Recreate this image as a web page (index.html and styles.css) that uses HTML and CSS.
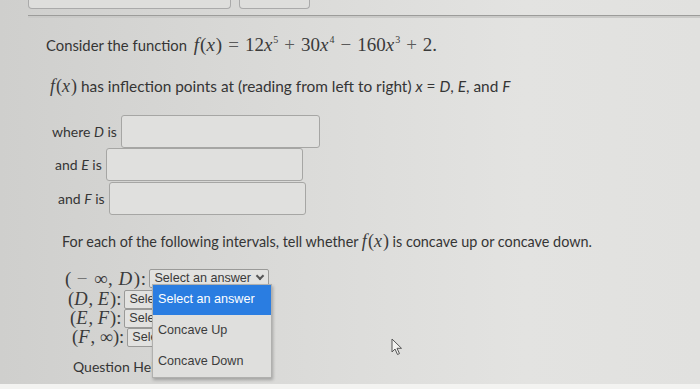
FILE: index.html
```html
<!DOCTYPE html>
<html lang="en">
<head>
  <meta charset="UTF-8">
  <title>Inflection points</title>
  <link rel="stylesheet" href="styles.css">
</head>
<body>
  <div class="page">
    <!-- tabs cut off at the top of the photo -->
    <div class="topbar">
      <div class="tab tab-wide"></div>
      <div class="tab tab-small"></div>
    </div>

    <p class="line line-first">Consider the function <span class="m"><i>f</i>(<i>x</i>)<span class="op">=</span>12<i>x</i><sup>5</sup><span class="op">+</span>30<i>x</i><sup>4</sup><span class="op">−</span>160<i>x</i><sup>3</sup><span class="op">+</span>2.</span></p>

    <p class="line line-second"><span class="m"><i>f</i>(<i>x</i>)</span> has inflection points at (reading from left to right) <em>x</em> = <em>D</em>, <em>E</em>, and <em>F</em></p>

    <div class="answers">
      <div class="answer-row row-d"><span>where <em>D</em> is</span><input type="text" class="answer-box"></div>
      <div class="answer-row row-e"><span>and <em>E</em> is</span><input type="text" class="answer-box"></div>
      <div class="answer-row row-f"><span>and <em>F</em> is</span><input type="text" class="answer-box"></div>
    </div>

    <p class="line line-intervals">For each of the following intervals, tell whether <span class="m"><i>f</i>(<i>x</i>)</span> is concave up or concave down.</p>

    <div class="intervals">
      <div class="interval interval-1"><span class="m">(<span class="neg">−</span>∞, <i>D</i>):</span><div class="select">Select an answer <span class="chev"></span></div></div>
      <div class="interval interval-2"><span class="m">(<i>D</i>, <i>E</i>):</span><div class="select select-cut"><span class="cut">Select an answer</span></div></div>
      <div class="interval interval-3"><span class="m">(<i>E</i>, <i>F</i>):</span><div class="select select-cut"><span class="cut">Select an answer</span></div></div>
      <div class="interval interval-4"><span class="m">(<i>F</i>, ∞):</span><div class="select select-cut select-short"><span class="cut">Select an answer</span></div></div>

      <!-- open dropdown of the first select -->
      <ul class="options">
        <li class="active">Select an answer</li>
        <li>Concave Up</li>
        <li>Concave Down</li>
      </ul>
    </div>

    <p class="help"><span class="cut help-text">Question Help</span></p>

    <svg class="cursor" width="13" height="18" viewBox="0 0 13 18">
      <path d="M1 1 L1 14 L4 11 L6.5 16.5 L8.5 15.6 L6 10.3 L10.5 10.3 Z" fill="#f2f2f0" stroke="#555" stroke-width="1"/>
    </svg>
  </div>
</body>
</html>
```

FILE: styles.css
```css
/* Page */
body {
  margin: 0;
  background: linear-gradient(90deg, #cfcfcd 0%, #dadad8 40%, #e3e3e1 75%, #e1e1df 100%);
  color: #353535;
  font-family: 'Lato', 'Open Sans', sans-serif;
  font-size: 14px;
  width: 700px;
  height: 389px;
  overflow: hidden;
}

.page {
  position: relative;
  height: 384px;
  border-bottom: 5px solid #f3f3f1;
}

/* Top strip */
.topbar {
  display: flex;
  gap: 8px;
  height: 15px;
  margin-left: 28px;
  border-bottom: 1px solid #9c9c9a;
  box-shadow: 0 2px 0 #cacac8;
}

.tab {
  height: 8px;
  border: 1px solid #aaa;
  border-top: none;
  border-radius: 0 0 4px 4px;
  background: #dededc;
}

.tab-wide { width: 201px; }
.tab-small { width: 69px; }

/* Text lines */
.line {
  margin: 0;
  white-space: nowrap;
}

.line-first {
  padding: 18px 0 0 46px;
  font-size: 14.8px;
}

.line-second {
  padding: 20px 0 0 50px;
  font-size: 15.4px;
}

.line-intervals {
  padding: 16px 0 0 62px;
  font-size: 14.4px;
}

.m {
  font-family: 'Liberation Serif', 'Times New Roman', serif;
  font-size: 18px;
  color: #3a3a3a;
}

.line-first .m {
  font-size: 19px;
  margin-left: 3px;
}

.m i {
  padding-right: 1px;
}

.m sup {
  font-size: 10px;
  vertical-align: 8px;
  line-height: 0;
}

.op {
  margin: 0 6px;
  color: #5a5a5a;
}

.neg {
  margin: 0 6px 0 5px;
  color: #777;
}

/* Answer boxes */
.answers {
  padding-top: 18px;
}

.answer-row {
  display: flex;
  align-items: center;
  height: 33px;
  gap: 4px;
}

.answer-box {
  width: 195px;
  height: 31px;
  margin: 0;
  padding: 0;
  border: 1px solid #a6a6a4;
  border-radius: 3px;
  background: #e0e0de;
}

.row-d { padding-left: 52px; }
.row-e { padding-left: 55px; }
.row-f { padding-left: 58px; margin-top: 1px; }

.row-d .answer-box { width: 197px; }

/* Interval selects */
.intervals {
  position: relative;
  padding-top: 16px;
}

.interval {
  display: flex;
  align-items: center;
  gap: 3px;
  height: 19.2px;
  white-space: nowrap;
}

.interval-1 { padding-left: 65px; height: 21.5px; }
.interval-2 { padding-left: 68px; }
.interval-3 { padding-left: 70px; }
.interval-4 { padding-left: 72px; }

.interval .m {
  font-size: 18.5px;
  line-height: 19px;
}

.interval-1 .m {
  font-size: 19px;
  letter-spacing: 0.5px;
}

.select {
  height: 17px;
  line-height: 17px;
  padding: 0 4px;
  border: 1px solid #9a9a98;
  border-radius: 2px;
  background: #e2e2e0;
  font-family: 'Liberation Sans', Arial, sans-serif;
  font-size: 12.6px;
  color: #3a3a3a;
}

.select-cut {
  width: 32px;
}

.select-short {
  width: 23px;
}

.cut {
  display: block;
  overflow: hidden;
  white-space: nowrap;
}

.chev {
  display: inline-block;
  width: 4px;
  height: 4px;
  margin: 0 1px 3px 2px;
  border-right: 2px solid #555;
  border-bottom: 2px solid #555;
  transform: rotate(45deg);
}

/* Open list */
.options {
  position: absolute;
  left: 152px;
  top: 32px;
  width: 118px;
  margin: 0;
  padding: 0;
  list-style: none;
  background: #dfdfdd;
  border: 1px solid #b0b0ae;
  box-shadow: 1px 2px 3px rgba(0, 0, 0, 0.25);
  font-family: 'Liberation Sans', Arial, sans-serif;
  font-size: 12.6px;
  color: #3c3c3c;
}

.options li {
  height: 31px;
  line-height: 30px;
  padding-left: 5px;
}

.options li.active {
  height: 30px;
  line-height: 28px;
  background: #2a7de1;
  color: #fff;
}

.help {
  margin: 0;
  padding: 11px 0 0 73px;
}

.help-text {
  width: 79px;
}

.cursor {
  position: absolute;
  left: 391px;
  top: 338px;
}
```
